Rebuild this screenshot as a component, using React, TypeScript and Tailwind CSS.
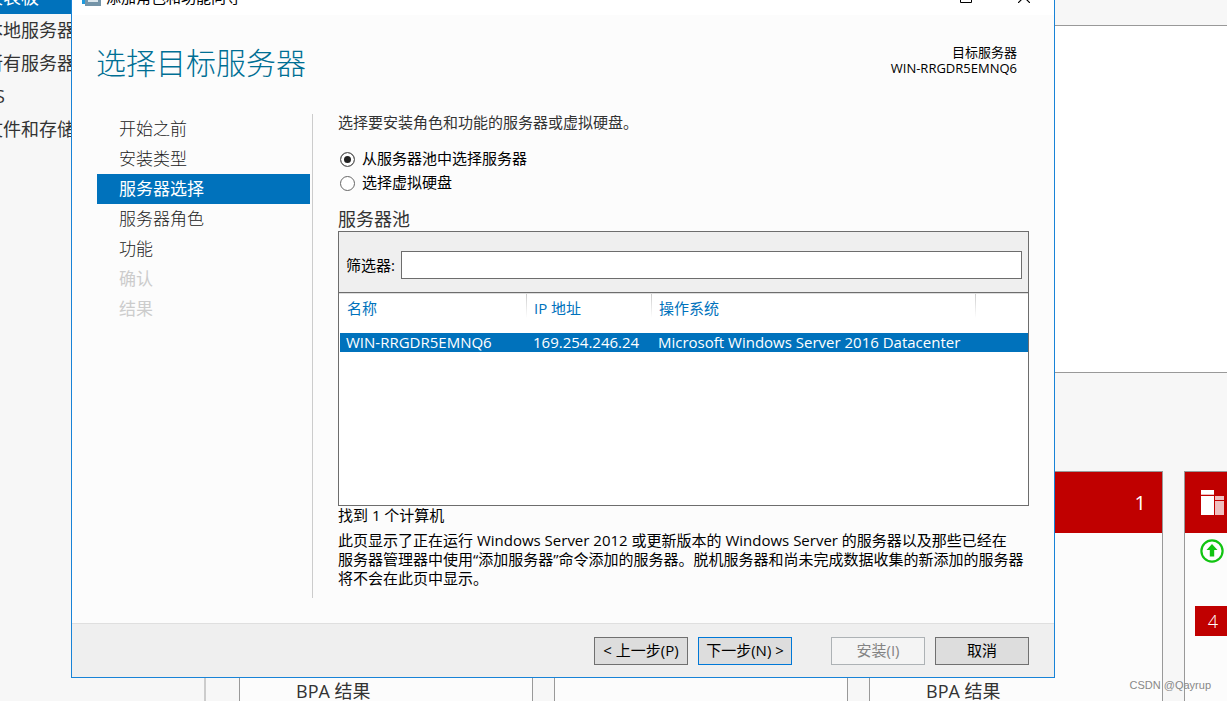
import React from 'react';

const sideItems = ['仪表板', '本地服务器', '所有服务器', 'IIS', '文件和存储服务'];

const steps = [
  { label: '开始之前', state: 'done' },
  { label: '安装类型', state: 'done' },
  { label: '服务器选择', state: 'current' },
  { label: '服务器角色', state: 'done' },
  { label: '功能', state: 'done' },
  { label: '确认', state: 'disabled' },
  { label: '结果', state: 'disabled' },
];

const stepStyles: Record<string, string> = {
  done: 'font-light text-[#222222]',
  current: 'bg-[#0072bc] text-white',
  disabled: 'text-[#cccccc]',
};

const ServersIcon = () => (
  <svg width="24" height="26" viewBox="0 0 24 26">
    <path d="M0 0h13v4H0zM0 6h13v19H0z" fill="#ffffff" />
    <path d="M0 4h13v1H0z" fill="#efb9b9" />
    <path d="M14 6h9v4h-9zM14 11h9v14h-9z" fill="#efbfbf" />
  </svg>
);

const UpIcon = () => (
  <svg width="24" height="24" viewBox="0 0 24 24">
    <circle cx="12" cy="12" r="10.6" fill="#ffffff" stroke="#12c412" strokeWidth="2.2" />
    <path d="M12 5l5.5 6h-3.300v6.500H9.800V11H6.500z" fill="#12c412" />
  </svg>
);

const WizardIcon = () => (
  <svg width="19" height="18" viewBox="0 0 19 18">
    <path d="M0 2h3v14H0z" fill="#1f9bde" />
    <path d="M3 0h16v18H3z" fill="#7494a8" />
    <path d="M6 3h10v11H6z" fill="#dbe6ec" />
    <path d="M7 10h8v2H7z" fill="#7494a8" />
  </svg>
);

const Tile: React.FC<{ count?: string; icon?: boolean; bpa?: boolean }> = ({ count, icon, bpa }) => (
  <section className="w-[294px] h-[260px] shrink-0 border border-[#999999] bg-[#fcfcfc]">
    <div className="flex h-[61px] items-center justify-between bg-[#c00000] px-4 text-xl text-white">
      {icon ? <ServersIcon /> : <span />}
      {count && <span>{count}</span>}
    </div>
    {icon && (
      <div className="flex flex-col items-start">
        <div className="px-[15px] py-[6px]">
          <UpIcon />
        </div>
        <div className="mt-[37px] ml-[10px] flex h-[30px] w-[36px] items-center justify-center bg-[#c00000] text-lg font-light text-white">
          4
        </div>
      </div>
    )}
    {bpa && <div className="pt-36 pl-14 text-lg leading-7 text-[#333333]">BPA 结果</div>}
  </section>
);

const Desktop = () => (
  <div className="flex h-screen">
    <nav className="-mt-[19px] w-[206px] shrink-0 border-r-2 border-[#cccccc] bg-[#f7f7f7]">
      <ul>
        {sideItems.map((item, idx) => (
          <li key={item} className={idx === 0 ? 'bg-[#0072bc] text-white' : 'text-[#333333]'}>
            <a href="#" className="-ml-[15px] flex h-[33px] items-center pb-[2px] text-lg whitespace-nowrap">
              {item}
            </a>
          </li>
        ))}
      </ul>
    </nav>
    <main className="min-w-0 flex-1 overflow-hidden pt-[25px] pl-[33px]">
      <section className="h-[348px] border-y border-[#999999] bg-white" />
      <div className="mt-[98px] flex gap-[21px]">
        <Tile bpa />
        <Tile />
        <Tile count="1" bpa />
        <Tile icon />
      </div>
    </main>
  </div>
);

const WizardButton: React.FC<React.ButtonHTMLAttributes<HTMLButtonElement>> = ({ children, className = '', ...rest }) => (
  <button
    type="button"
    className={`h-7 w-[94px] border pb-[2px] text-[15px] leading-5 whitespace-nowrap ${className}`}
    {...rest}
  >
    {children}
  </button>
);

const ServerPool = () => (
  <div className="flex h-[275px] flex-col border border-[#6d6d6d] bg-white">
    <div className="flex h-[61px] shrink-0 items-center gap-[6px] border-b border-[#6d6d6d] bg-[#efefef] pt-[6px] pr-[6px] pl-[7px]">
      <label htmlFor="filter" className="shrink-0 whitespace-nowrap">筛选器:</label>
      <input id="filter" type="text" className="h-7 min-w-0 flex-1 border border-[#6d6d6d] bg-white px-1 outline-none" />
    </div>
    <div className="border-t border-[#dddddd] pl-px">
      <table className="w-full table-fixed border-collapse text-left">
        <colgroup>
          <col className="w-[187px]" />
          <col className="w-[125px]" />
          <col className="w-[324px]" />
          <col />
        </colgroup>
        <thead>
          <tr className="h-[39px] align-top text-[#0072bc]">
            {['名称', 'IP 地址', '操作系统'].map((head) => (
              <th key={head} className="p-0 font-normal">
                <div className="flex h-6">
                  <span className="flex-1 pt-1 pl-[7px] leading-5">{head}</span>
                  <span className="w-px bg-linear-to-b from-[#cccccc] to-white" />
                </div>
              </th>
            ))}
            <th className="p-0" />
          </tr>
        </thead>
        <tbody>
          <tr className="h-[19px] bg-[#0072bc] leading-[19px] font-medium whitespace-nowrap text-white">
            <td className="p-0 pl-[6px]">WIN-RRGDR5EMNQ6</td>
            <td className="p-0 pl-[6px]">169.254.246.24</td>
            <td className="p-0 pl-[6px]">Microsoft Windows Server 2016 Datacenter</td>
            <td className="p-0" />
          </tr>
        </tbody>
      </table>
    </div>
  </div>
);

const Radio: React.FC<{ label: string; checked?: boolean }> = ({ label, checked }) => (
  <label className="flex h-6 items-center gap-[7px]">
    <input
      type="radio"
      name="source"
      defaultChecked={checked}
      className="size-[15px] appearance-none rounded-full border border-[#666666] bg-white checked:bg-[#222222] checked:shadow-[inset_0_0_0_3px_white]"
    />
    <span className="pb-[2px]">{label}</span>
  </label>
);

const Wizard = () => (
  <div
    role="dialog"
    className="absolute -top-[19px] right-[172px] left-[71px] border border-[#1883d7] bg-[#fcfcfc] text-[15px] text-black"
  >
    <div className="flex h-[33px] items-center justify-between bg-white pr-6 pb-1 pl-[10px]">
      <div className="flex items-center gap-[5px] leading-5">
        <WizardIcon />
        <span>添加角色和功能向导</span>
      </div>
      <div className="flex gap-[46px]">
        <button type="button" aria-label="最大化">
          <svg width="12" height="12" viewBox="0 0 12 12">
            <path d="M.5 .5h11v11H.5z" fill="none" stroke="#000000" />
          </svg>
        </button>
        <button type="button" aria-label="关闭">
          <svg width="12" height="12" viewBox="0 0 12 12">
            <path d="M0 0l12 12M12 0L0 12" stroke="#000000" strokeWidth="1.2" />
          </svg>
        </button>
      </div>
    </div>

    <header className="flex h-[99px] items-start justify-between pr-[37px] pl-6">
      <h1 className="pt-7 text-[30px] leading-10 font-light text-[#006f94]">选择目标服务器</h1>
      <div className="pt-[29px] text-right text-[13px] leading-4">
        <div>目标服务器</div>
        <div>WIN-RRGDR5EMNQ6</div>
      </div>
    </header>

    <div className="flex h-[509px] pr-[25px] pb-[25px] pl-[25px]">
      <ol className="w-[216px] shrink-0 border-r border-[#cccccc] pr-[2px] text-[17px]">
        {steps.map((step) => (
          <li key={step.label} className={`flex h-[30px] items-center pl-[22px] ${stepStyles[step.state]}`}>
            {step.label}
          </li>
        ))}
      </ol>
      <div className="min-w-0 flex-1 pl-[25px]">
        <p className="leading-[17px] text-[#333333]">选择要安装角色和功能的服务器或虚拟硬盘。</p>
        <div className="pt-4 pl-[2px]">
          <Radio label="从服务器池中选择服务器" checked />
          <Radio label="选择虚拟硬盘" />
        </div>
        <h2 className="pt-3 text-lg leading-6 text-[#333333]">服务器池</h2>
        <ServerPool />
        <p className="leading-[19px]">找到 1 个计算机</p>
        <p className="pt-[6px] leading-[19px] whitespace-nowrap">
          此页显示了正在运行 Windows Server 2012 或更新版本的 Windows Server 的服务器以及那些已经在
          <br />
          服务器管理器中使用“添加服务器”命令添加的服务器。脱机服务器和尚未完成数据收集的新添加的服务器
          <br />
          将不会在此页中显示。
        </p>
      </div>
    </div>

    <footer className="flex h-[54px] items-center justify-end gap-[10px] border-t border-[#dfdfdf] bg-[#efefef] pr-[25px]">
      <WizardButton className="border-[#707070] bg-[#dddddd]">&lt; 上一步(P)</WizardButton>
      <WizardButton className="mr-[29px] border-[#0078d7] bg-[#dddddd]">下一步(N) &gt;</WizardButton>
      <WizardButton className="border-[#adb2b5] bg-[#f4f4f4] text-[#838383]" disabled>安装(I)</WizardButton>
      <WizardButton className="border-[#707070] bg-[#dddddd]">取消</WizardButton>
    </footer>
  </div>
);

export default function App() {
  return (
    <div className="relative min-h-screen overflow-hidden bg-[#f7f7f7] font-['Open_Sans','Noto_Sans_CJK_SC',sans-serif]">
      <Desktop />
      <Wizard />
      <div className="absolute right-4 bottom-2 font-['Liberation_Sans',sans-serif] text-[11px] leading-4 text-[#888888]">
        CSDN @Qayrup
      </div>
    </div>
  );
}
